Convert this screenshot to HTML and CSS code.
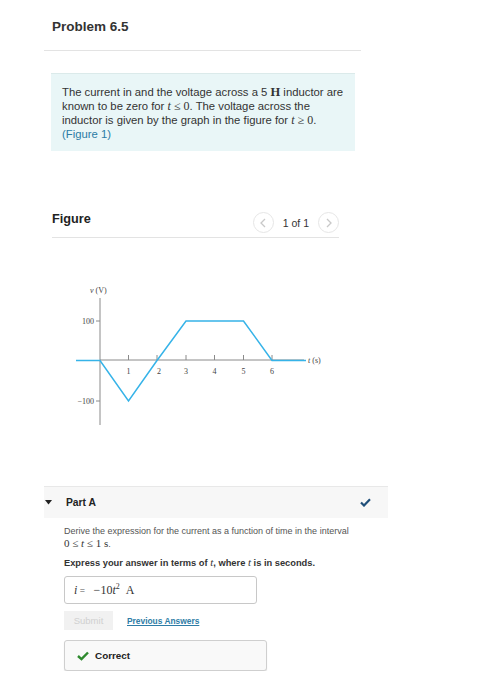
FILE: index.html
```html
<!DOCTYPE html>
<html>
<head>
<meta charset="utf-8">
<link rel="stylesheet" href="styles.css">
</head>
<body>
<div class="page">
  <div class="problem-header">
    <h1 class="title">Problem 6.5</h1>
  </div>
  <div class="intro">
    The current in and the voltage across a 5 <span class="mb">H</span> inductor are known to be zero for <span class="mi">t</span> <span class="m">≤ 0</span>. The voltage across the inductor is given by the graph in the figure for <span class="mi">t</span> <span class="m">≥ 0</span>.<br>
    <a class="fig-link">(Figure 1)</a>
  </div>

  <div class="figure-section">
    <div class="figure-head">
      <h2 class="fig-title">Figure</h2>
      <div class="pager">
        <span class="pg-btn"><svg width="8" height="10" viewBox="0 0 8 10"><path d="M6 1 L2 5 L6 9" fill="none" stroke="#c8c8c8" stroke-width="1.3"/></svg></span>
        <span class="pg-text">1 of 1</span>
        <span class="pg-btn"><svg width="8" height="10" viewBox="0 0 8 10"><path d="M2 1 L6 5 L2 9" fill="none" stroke="#c8c8c8" stroke-width="1.3"/></svg></span>
      </div>
    </div>
    <svg class="graph" width="280" height="170" viewBox="0 0 280 170">
      <g stroke="#8a8a8a" stroke-width="1" fill="none">
        <line x1="40" y1="28" x2="40" y2="155"/>
        <line x1="40" y1="90" x2="244" y2="90"/>
        <line x1="36" y1="51" x2="40" y2="51"/>
        <line x1="36" y1="131" x2="40" y2="131"/>
        <line x1="68.5" y1="85" x2="68.5" y2="90"/>
        <line x1="97" y1="85" x2="97" y2="90"/>
        <line x1="126" y1="85" x2="126" y2="90"/>
        <line x1="154.5" y1="85" x2="154.5" y2="90"/>
        <line x1="183.5" y1="85" x2="183.5" y2="90"/>
        <line x1="212" y1="85" x2="212" y2="90"/>
      </g>
      <polyline points="16,90.5 40,90.5 68.5,131 97,90.5 126,51 183.5,51 212,90.5 246,90.5" fill="none" stroke="#36b3e8" stroke-width="1.5"/>
      <g class="gt">
        <text x="30" y="23"><tspan font-style="italic">v</tspan> (V)</text>
        <text x="34" y="54" text-anchor="end">100</text>
        <text x="34" y="134" text-anchor="end">−100</text>
        <text x="68.5" y="104" text-anchor="middle">1</text>
        <text x="99" y="104" text-anchor="middle">2</text>
        <text x="126" y="104" text-anchor="middle">3</text>
        <text x="154.5" y="104" text-anchor="middle">4</text>
        <text x="183.5" y="104" text-anchor="middle">5</text>
        <text x="212" y="104" text-anchor="middle">6</text>
        <text x="248" y="93"><tspan font-style="italic">t</tspan> (s)</text>
      </g>
    </svg>
  </div>

  <div class="part">
    <div class="part-head">
      <svg class="caret" width="7" height="5" viewBox="0 0 7 5"><path d="M0 0 H7 L3.5 4.5 Z" fill="#222"/></svg>
      <span class="part-title">Part A</span>
      <svg class="part-check" width="11" height="9" viewBox="0 0 11 9"><path d="M1 4.5 L4 7.5 L10 1.2" fill="none" stroke="#1f4f7a" stroke-width="2.2"/></svg>
    </div>
    <div class="part-body">
      <p class="q">Derive the expression for the current as a function of time in the interval <br><span class="m">0 ≤ <i>t</i> ≤ 1 s</span>.</p>
      <p class="instr">Express your answer in terms of <span class="mi">t</span>, where <span class="mi">t</span> is in seconds.</p>
      <div class="answer"><span class="m"><i>i</i></span><span class="eq"> = </span><span class="m">  −10<i>t</i><sup>2</sup>&nbsp;&nbsp;A</span></div>
      <div class="actions">
        <span class="submit">Submit</span>
        <a class="prev">Previous Answers</a>
      </div>
      <div class="correct">
        <svg width="12" height="10" viewBox="0 0 12 10"><path d="M1 5 L4.5 8.2 L11 1.5" fill="none" stroke="#2e8a2e" stroke-width="2.4"/></svg>
        <span>Correct</span>
      </div>
    </div>
  </div>
</div>
</body>
</html>
```

FILE: styles.css
```css
html, body { margin: 0; padding: 0; background: #fff; }
body { font-family: "Liberation Sans", Arial, sans-serif; color: #333; }
.page { padding: 18px 0 0 44px; }
.problem-header { width: 317px; border-bottom: 1px solid #e3e3e3; }
.title { margin: 0; padding: 0 0 14px 8px; font-size: 13.5px; line-height: 18px; font-weight: bold; color: #333; }
.intro {
  margin: 22px 0 0 7px; width: 285px; height: 54px;
  padding: 11px 8px 12px 11px;
  background: #e9f6f7; border-top: 1px solid #dbeaea;
  font-size: 11.3px; line-height: 14px; color: #333;
}
.m, .mb, .mi { font-family: "Liberation Serif", "DejaVu Serif", serif; font-size: 12px; }
.mb { font-weight: bold; font-size: 12.5px; }
.mi { font-style: italic; }
.fig-link { color: #2b7ca5; }
.figure-section { margin: 57px 0 0 8px; width: 287px; }
.figure-head { display: flex; align-items: flex-start; justify-content: space-between; border-bottom: 1px solid #e3e3e3; height: 29px; }
.fig-title { margin: 3px 0 0 0; font-size: 12.7px; line-height: 16px; font-weight: bold; color: #222; }
.pager { display: flex; align-items: center; gap: 7px; margin-top: 4px; }
.pg-btn { width: 19px; height: 19px; border: 1px solid #e6e6e6; border-radius: 50%; display: flex; align-items: center; justify-content: center; }
.pg-text { font-size: 10.5px; color: #333; margin: 0 2px; }
.graph { display: block; margin: 32px 0 0 8px; }
.gt text { font-family: "Liberation Serif", "DejaVu Serif", serif; font-size: 8px; fill: #444; }
.part { margin: 46px 0 0 0; width: 344px; }
.part-head { display: flex; align-items: center; height: 31px; background: #f7f7f7; border-top: 1px solid #e8e8e8; }
.caret { margin-left: 1px; margin-right: 14px; }
.part-title { font-size: 10.3px; font-weight: bold; color: #222; flex: 1; }
.part-check { margin-right: 17px; }
.part-body { padding: 7px 0 0 20px; }
.q { margin: 0; font-size: 9px; line-height: 12px; color: #555; }
.q .m { font-size: 11px; color: #333; }
.instr { margin: 6px 0 0 0; font-size: 9.3px; line-height: 12px; font-weight: bold; color: #333; }
.instr .mi { font-weight: normal; font-size: 11px; }
.answer { margin-top: 7px; width: 182px; height: 26px; border: 1px solid #c8c8c8; border-radius: 3px; padding-left: 9px; display: flex; align-items: center; font-size: 11px; }
.answer .m { font-size: 12px; color: #333; white-space: pre; }
.answer .eq { font-size: 9px; color: #555; white-space: pre; }
.answer sup { font-size: 8px; }
.actions { display: flex; align-items: center; margin-top: 7px; gap: 14px; }
.submit { width: 49px; height: 19px; background: #f1f1f1; color: #d0d0d0; font-size: 9.5px; display: flex; align-items: center; justify-content: center; }
.prev { color: #2e7ca6; font-size: 8.4px; font-weight: bold; text-decoration: underline; }
.correct { margin-top: 10px; width: 189px; height: 29px; border: 1px solid #cfcfcf; border-radius: 3px; background: #f9f9f9; box-shadow: 0 1px 1px rgba(0,0,0,0.12); display: flex; align-items: center; padding-left: 12px; gap: 6px; font-size: 9.9px; font-weight: bold; color: #222; }
```
